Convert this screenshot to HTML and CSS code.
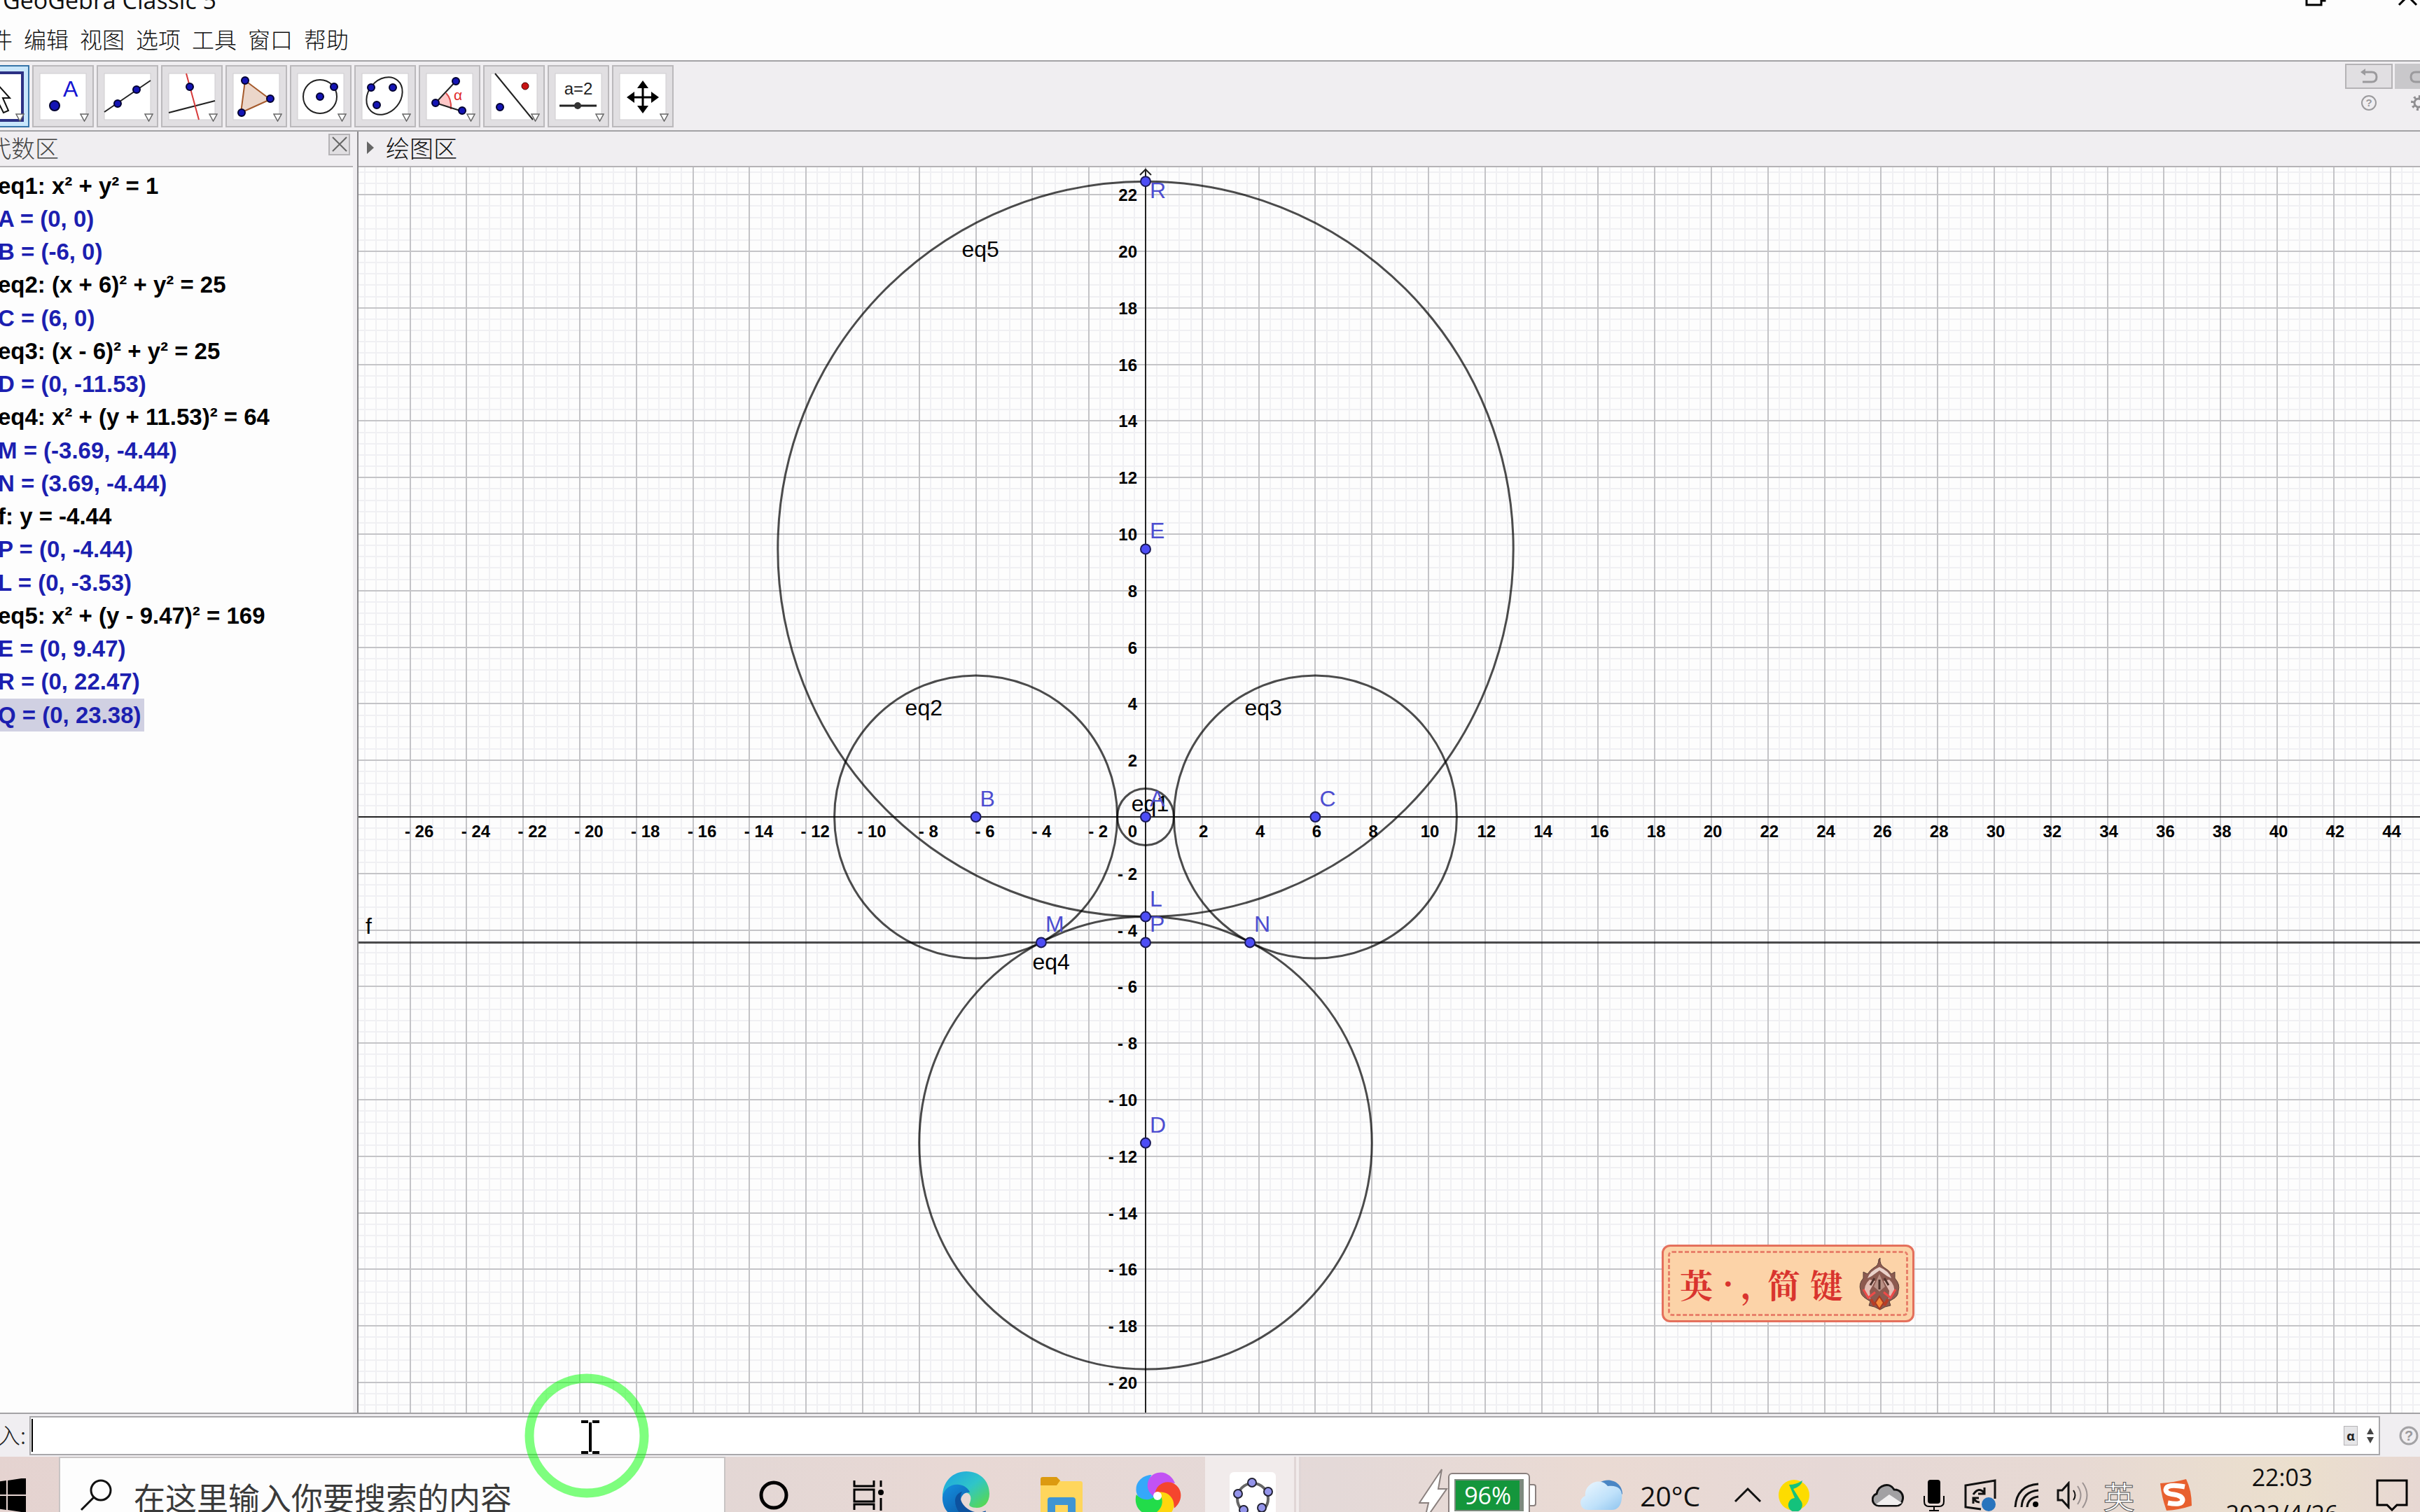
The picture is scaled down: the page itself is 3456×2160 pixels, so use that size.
FILE: index.html
```html
<!DOCTYPE html>
<html lang="zh-CN">
<head>
    <meta charset="UTF-8">
    <meta name="viewport" content="width=device-width, initial-scale=1.0">
    <title>GeoGebra Classic 5</title>
    <link rel="stylesheet" href="styles.css">
</head>
<body>
    <div class="screen">
        <header class="titlebar">
            <h1>GeoGebra Classic 5</h1>
            <div class="window-buttons">
                <button aria-label="还原"><svg width="30" height="30" viewBox="0 0 30 30"><path d="M8 6V1h20v20h-4M2 7h21v20H2z" fill="none" stroke="#000" stroke-width="3"/></svg></button>
                <button aria-label="关闭"><svg width="30" height="30" viewBox="0 0 30 30"><path d="M2 2l25 25M27 2L2 27" stroke="#000" stroke-width="3"/></svg></button>
            </div>
        </header>

        <nav class="menubar">
            <button>文件</button>
            <button>编辑</button>
            <button>视图</button>
            <button>选项</button>
            <button>工具</button>
            <button>窗口</button>
            <button>帮助</button>
        </nav>

        <svg class="defs" width="0" height="0">
            <symbol id="caret" viewBox="0 0 13 12"><path d="M1 1h11L6.500 11z" fill="#fff" stroke="#666" stroke-width="1.500"/></symbol>
        </svg>

        <div class="toolbar">
            <button class="tool selected" aria-label="移动">
                <svg viewBox="0 0 88 88"><rect x="9" y="10" width="69" height="68" fill="#fff" stroke="#2c3184" stroke-width="4"/><path d="M33 16v41l9-8 9 18 7-3-8-18h10z" fill="#fff" stroke="#111" stroke-width="2"/><use href="#caret" x="68" y="68" width="13" height="12"/></svg>
            </button>
            <button class="tool" aria-label="点">
                <svg viewBox="0 0 88 88"><rect x="11" y="11" width="66" height="66" class="sheet"/><circle cx="32" cy="57" r="7" class="dot"/><text x="44" y="44" font-size="32" fill="#1414d2">A</text><use href="#caret" x="68" y="68" width="13" height="12"/></svg>
            </button>
            <button class="tool" aria-label="直线">
                <svg viewBox="0 0 88 88"><rect x="11" y="11" width="66" height="66" class="sheet"/><path d="M11 66l66-45" class="ink"/><circle cx="30" cy="54" r="5" class="dot"/><circle cx="57" cy="34" r="5" class="dot"/><use href="#caret" x="68" y="68" width="13" height="12"/></svg>
            </button>
            <button class="tool" aria-label="垂线">
                <svg viewBox="0 0 88 88"><rect x="11" y="11" width="66" height="66" class="sheet"/><path d="M11 67l66-17" class="ink"/><path d="M36 11l18 66" stroke="#d83a3a" stroke-width="2"/><circle cx="41" cy="30" r="5" class="dot"/><use href="#caret" x="68" y="68" width="13" height="12"/></svg>
            </button>
            <button class="tool" aria-label="多边形">
                <svg viewBox="0 0 88 88"><rect x="11" y="11" width="66" height="66" class="sheet"/><path d="M28 21l36 27-42 19z" fill="#ebd6ca" stroke="#a55a2c" stroke-width="2"/><circle cx="28" cy="21" r="5" class="dot"/><circle cx="64" cy="47" r="5" class="dot"/><circle cx="23" cy="67" r="5" class="dot"/><use href="#caret" x="68" y="68" width="13" height="12"/></svg>
            </button>
            <button class="tool" aria-label="圆">
                <svg viewBox="0 0 88 88"><rect x="11" y="11" width="66" height="66" class="sheet"/><circle cx="43" cy="44" r="24" class="ink"/><circle cx="43" cy="44" r="5" class="dot"/><circle cx="63" cy="30" r="5" class="dot"/><use href="#caret" x="68" y="68" width="13" height="12"/></svg>
            </button>
            <button class="tool" aria-label="椭圆">
                <svg viewBox="0 0 88 88"><rect x="11" y="11" width="66" height="66" class="sheet"/><ellipse cx="43" cy="43" rx="29" ry="23" transform="rotate(-50 43 43)" class="ink"/><circle cx="24" cy="31" r="5" class="dot"/><circle cx="55" cy="31" r="5" class="dot"/><circle cx="32" cy="56" r="5" class="dot"/><use href="#caret" x="68" y="68" width="13" height="12"/></svg>
            </button>
            <button class="tool" aria-label="角度">
                <svg viewBox="0 0 88 88"><rect x="11" y="11" width="66" height="66" class="sheet"/><path d="M24 53l15-14q8 8 6 22z" fill="#ffc8c8"/><path d="M39 39q8 8 7 23" fill="none" stroke="#e04848" stroke-width="2"/><path d="M53 22L24 53l38 12" class="ink"/><text x="50" y="49" font-size="21" fill="#e02828">α</text><circle cx="53" cy="22" r="5" class="dot"/><circle cx="24" cy="53" r="5" class="dot"/><circle cx="62" cy="64" r="5" class="dot"/><use href="#caret" x="68" y="68" width="13" height="12"/></svg>
            </button>
            <button class="tool" aria-label="轴对称">
                <svg viewBox="0 0 88 88"><rect x="11" y="11" width="66" height="66" class="sheet"/><path d="M17 11l54 66" class="ink"/><circle cx="60" cy="29" r="5" fill="#c81414" stroke="#400" stroke-width="1"/><circle cx="24" cy="59" r="5" class="dot"/><use href="#caret" x="68" y="68" width="13" height="12"/></svg>
            </button>
            <button class="tool" aria-label="滑动条">
                <svg viewBox="0 0 88 88"><rect x="11" y="11" width="66" height="66" class="sheet"/><text x="44" y="41" font-size="24" text-anchor="middle" fill="#222">a=2</text><path d="M17 57h53" stroke="#222" stroke-width="3"/><circle cx="43" cy="57" r="5" fill="#333"/><use href="#caret" x="68" y="68" width="13" height="12"/></svg>
            </button>
            <button class="tool" aria-label="移动视图">
                <svg viewBox="0 0 88 88"><rect x="11" y="11" width="66" height="66" class="sheet"/><path d="M26 45h35M44 27v35" stroke="#000" stroke-width="3"/><path d="M44 21l8 11H36zM44 68l8-11H36zM21 45l11-8v16zM67 45l-11-8v16z"/><use href="#caret" x="68" y="68" width="13" height="12"/></svg>
            </button>

            <div class="toolbar-side">
                <button class="undo" aria-label="撤销"><svg width="26" height="22" viewBox="0 0 26 22"><path d="M7 5h10q7 0 7 7t-7 7H4" fill="none" stroke="#9b9a9d" stroke-width="3"/><path d="M8 0v10L1 5z" fill="#9b9a9d"/></svg></button>
                <button class="redo" aria-label="重做"><svg width="26" height="22" viewBox="0 0 26 22"><path d="M19 5H9q-7 0-7 7t7 7h13" fill="none" stroke="#9b9a9d" stroke-width="3"/><path d="M18 0v10l7-5z" fill="#9b9a9d"/></svg></button>
                <button class="plain" aria-label="帮助"><svg width="24" height="24" viewBox="0 0 24 24"><circle cx="12" cy="12" r="10" fill="none" stroke="#9b9a9d" stroke-width="2"/><text x="12" y="17" font-size="15" font-weight="bold" text-anchor="middle" fill="#9b9a9d">?</text></svg></button>
                <button class="plain" aria-label="设置"><svg width="24" height="24" viewBox="0 0 24 24"><circle cx="12" cy="12" r="6" fill="none" stroke="#8f8e91" stroke-width="3"/><circle cx="12" cy="12" r="9" fill="none" stroke="#8f8e91" stroke-width="4" stroke-dasharray="3 4"/></svg></button>
            </div>
        </div>

        <main class="workspace">
            <section class="algebra">
                <div class="panel-head">
                    <h2>代数区</h2>
                    <button class="close" aria-label="关闭代数区"><svg width="24" height="24" viewBox="0 0 24 24"><path d="M2 2l20 20M22 2L2 22" stroke="#666" stroke-width="2"/></svg></button>
                </div>
                <ul class="objects">
                    <li>eq1: x² + y² = 1</li>
                    <li class="point">A = (0, 0)</li>
                    <li class="point">B = (-6, 0)</li>
                    <li>eq2: (x + 6)² + y² = 25</li>
                    <li class="point">C = (6, 0)</li>
                    <li>eq3: (x - 6)² + y² = 25</li>
                    <li class="point">D = (0, -11.53)</li>
                    <li>eq4: x² + (y + 11.53)² = 64</li>
                    <li class="point">M = (-3.69, -4.44)</li>
                    <li class="point">N = (3.69, -4.44)</li>
                    <li>f: y = -4.44</li>
                    <li class="point">P = (0, -4.44)</li>
                    <li class="point">L = (0, -3.53)</li>
                    <li>eq5: x² + (y - 9.47)² = 169</li>
                    <li class="point">E = (0, 9.47)</li>
                    <li class="point">R = (0, 22.47)</li>
                    <li class="point"><span class="current">Q = (0, 23.38)</span></li>
                </ul>
            </section>

            <section class="graphics">
                <div class="panel-head">
                    <span class="expand"></span>
                    <h2>绘图区</h2>
                </div>
                <svg id="graph" class="graph"></svg>
            </section>
        </main>

        <div class="inputbar">
            <label for="command">输入:</label>
            <div class="command-box">
                <span class="text-caret"></span>
                <input type="text" id="command">
                <button class="alpha" aria-label="符号">α</button>
                <button class="history" aria-label="历史"><svg width="12" height="24" viewBox="0 0 12 24"><path d="M6 1l5 9H1zM6 23l5-9H1z" fill="#444"/></svg></button>
            </div>
            <button class="input-help" aria-label="输入帮助"><svg width="30" height="30" viewBox="0 0 30 30"><circle cx="15" cy="15" r="12" fill="none" stroke="#a3a2a5" stroke-width="3"/><text x="15" y="22" font-size="20" font-weight="bold" text-anchor="middle" fill="#9b9a9d">?</text></svg></button>
        </div>

        <footer class="taskbar">
            <button class="start" aria-label="开始"><svg width="50" height="48" viewBox="0 0 50 48"><path d="M0 6l22-3v20H0zM24 3l26-4v24H24zM0 25h22v20L0 42zM24 25h26v24l-26-4z"/></svg></button>
            <div class="search">
                <svg width="48" height="48" viewBox="0 0 48 48"><circle cx="31" cy="17" r="14" fill="none" stroke="#111" stroke-width="3"/><path d="M21 27L3 45" stroke="#111" stroke-width="3"/></svg>
                <input type="text" aria-label="搜索" placeholder="在这里输入你要搜索的内容">
            </div>
            <button class="app" aria-label="Cortana"><svg width="48" height="48" viewBox="0 0 48 48"><circle cx="24" cy="24" r="18" fill="none" stroke="#000" stroke-width="5"/></svg></button>
            <button class="app" aria-label="任务视图"><svg width="48" height="48" viewBox="0 0 48 48"><path d="M2 3v8h28V3M2 45v-8h28v8M2 16h28v17H2zM40 3v9M40 28v18" fill="none" stroke="#000" stroke-width="3"/><circle cx="40" cy="20" r="4"/></svg></button>
            <button class="app" aria-label="Edge">
                <svg width="68" height="68" viewBox="0 0 68 68">
                    <defs>
                        <linearGradient id="edgeTop" x1="0" y1="0" x2="1" y2="1"><stop offset="0" stop-color="#1ba1e2"/><stop offset=".5" stop-color="#2fc5c9"/><stop offset="1" stop-color="#5fdc3c"/></linearGradient>
                        <linearGradient id="edgeLow" x1="0" y1="0" x2="1" y2="1"><stop offset="0" stop-color="#148fe0"/><stop offset="1" stop-color="#0b4a94"/></linearGradient>
                    </defs>
                    <path d="M1 36C1 14 16 0 35 0c20 0 33 14 33 32 0 13-8 20-18 20-8 0-13-3-10-7 4-10-1-15-8-15C24 16 8 22 1 36z" fill="url(#edgeTop)"/>
                    <path d="M1 36c2-12 13-19 24-17 7 1 13 5 15 11-8-1-13 5-13 12 1 11 12 19 22 18 6-1 12-3 14-4-5 8-16 12-28 12C12 68 0 54 1 36z" fill="url(#edgeLow)"/>
                    <path d="M19 42c0-7 5-12 10-13-3 5-3 11 0 16 6 10 17 14 26 14 4-1 7-3 8-2-4 7-14 11-22 11-12-2-22-13-22-26z" fill="#0d529f"/>
                </svg>
            </button>
            <button class="app" aria-label="文件资源管理器"><svg width="60" height="56" viewBox="0 0 60 56"><path d="M0 6q0-3 3-3h20l6 5h28q3 0 3 3v45H0z" fill="#ffd65c"/><path d="M0 5q0-3 3-3h20l5 5-5 7H0z" fill="#dc9a10"/><path d="M10 56V35q0-4 4-4h32q4 0 4 4v21H39V42H21v14z" fill="#3f95d3"/></svg></button>
            <button class="app" aria-label="浏览器">
                <svg width="68" height="68" viewBox="0 0 68 68">
                    <path d="M34 38C14 32 16 6 34 2c12-3 22 6 25 15-14-3-23 5-25 21z" fill="#35a8fa" transform="rotate(288 34 34)"/>
                    <path d="M34 38C14 32 16 6 34 2c12-3 22 6 25 15-14-3-23 5-25 21z" fill="#c252f4"/>
                    <path d="M34 38C14 32 16 6 34 2c12-3 22 6 25 15-14-3-23 5-25 21z" fill="#f5452e" transform="rotate(72 34 34)"/>
                    <path d="M34 38C14 32 16 6 34 2c12-3 22 6 25 15-14-3-23 5-25 21z" fill="#fed60e" transform="rotate(144 34 34)"/>
                    <path d="M34 38C14 32 16 6 34 2c12-3 22 6 25 15-14-3-23 5-25 21z" fill="#22dc4a" transform="rotate(216 34 34)"/>
                    <circle cx="34" cy="35" r="6" fill="#fff"/>
                </svg>
            </button>
            <button class="app active" aria-label="GeoGebra">
                <svg width="66" height="66" viewBox="0 0 66 66"><rect width="66" height="66" rx="6" fill="#fff"/><ellipse cx="33" cy="38" rx="22" ry="22" fill="none" stroke="#666" stroke-width="4"/><g fill="#9494ea" stroke="#223" stroke-width="2"><circle cx="32" cy="15" r="6"/><circle cx="55" cy="28" r="6"/><circle cx="46" cy="51" r="6"/><circle cx="20" cy="54" r="6"/><circle cx="12" cy="31" r="6"/></g></svg>
            </button>

            <div class="tray">
                <div class="battery">
                    <svg width="42" height="78" viewBox="0 0 42 78"><path d="M33 2L1 50h13L8 76l32-46H28z" fill="#fff" stroke="#8a807e" stroke-width="2"/></svg>
                    <div class="cell"><span>96%</span></div>
                    <i class="nub"></i>
                </div>
                <button class="weather">
                    <svg width="62" height="46" viewBox="0 0 62 46">
                        <defs><linearGradient id="sky" x1="0" y1="0" x2="1" y2="1"><stop offset="0" stop-color="#eef8ff"/><stop offset=".6" stop-color="#bfe1fa"/><stop offset="1" stop-color="#8fc4ee"/></linearGradient></defs>
                        <path d="M30 4c10-6 30-2 31 17l-8 8-20-14z" fill="#4a86c4"/>
                        <path d="M12 44C0 44-3 28 8 24 6 6 30-4 40 10c14-2 22 4 20 18-1 10-6 16-14 16z" fill="url(#sky)"/>
                    </svg>
                    20°C
                </button>
                <button class="tray-icon" aria-label="显示隐藏的图标"><svg width="40" height="24" viewBox="0 0 40 24"><path d="M2 21L20 3l18 18" fill="none" stroke="#111" stroke-width="3"/></svg></button>
                <button class="tray-icon music" aria-label="音乐"><svg width="46" height="46" viewBox="0 0 46 46"><circle cx="23" cy="23" r="22" fill="#fddc00"/><path d="M16 8q10 0 19-6-1 8-13 12l10 16a10 10 0 1 1-8-3z" fill="#14c27c"/></svg></button>
                <button class="tray-icon" aria-label="OneDrive"><svg width="46" height="34" viewBox="0 0 46 34"><path d="M10 32C0 32-2 18 7 15 9 2 26-2 32 9c10 0 14 8 12 15-1 5-4 8-9 8z" fill="#a2a1a3" stroke="#111" stroke-width="3"/><path d="M6 30l19-14 18 12-6 3H10z" fill="#f1efef"/></svg></button>
                <button class="tray-icon" aria-label="麦克风"><svg width="34" height="46" viewBox="0 0 34 46"><rect x="8" y="1" width="18" height="34" rx="4"/><path d="M3 24v8q0 7 7 7h14q7 0 7-7v-8M17 39v6M10 45h14" fill="none" stroke="#000" stroke-width="2"/></svg></button>
                <button class="tray-icon" aria-label="更新"><svg width="46" height="46" viewBox="0 0 46 46"><path d="M44 28V2L2 9v31l22 3" fill="none" stroke="#111" stroke-width="3"/><path d="M13 22q8-12 16-2M29 12v9h-9M22 33q-6 0-8-6M13 35v-8h8" fill="none" stroke="#111" stroke-width="3"/><circle cx="35" cy="36" r="10" fill="#2874bd"/></svg></button>
                <button class="tray-icon" aria-label="网络"><svg width="36" height="36" viewBox="0 0 36 36"><path d="M2 35Q4 4 35 2M11 35Q12 13 35 11M19 35q1-13 16-15" fill="none" stroke="#111" stroke-width="3"/><circle cx="31" cy="31" r="4"/></svg></button>
                <button class="tray-icon" aria-label="音量"><svg width="46" height="40" viewBox="0 0 46 40"><path d="M2 13h6l9-10v34L8 27H2z" fill="none" stroke="#111" stroke-width="3"/><path d="M24 13q5 7 0 14" fill="none" stroke="#111" stroke-width="2"/><path d="M30 7q9 13 0 26M37 2q13 18 0 36" fill="none" stroke="#9b9291" stroke-width="2"/></svg></button>
                <button class="tray-icon ime">英</button>
                <button class="tray-icon sogou" aria-label="搜狗输入法"><svg width="46" height="46" viewBox="0 0 46 46"><path d="M1 6Q20 5 38 0q8 16 8 38-18 6-36 7Q3 26 1 6z" fill="#e8602f"/><path d="M36 11q-26-5-27 4 0 6 12 7 12 2 12 8-1 8-21 4" fill="none" stroke="#fff" stroke-width="7"/></svg></button>
                <button class="clock"><time>22:03</time><time>2022/4/26</time></button>
                <button class="notify" aria-label="通知"><svg width="46" height="46" viewBox="0 0 46 46"><path d="M2 2h42v35H30l-7 7-7-7H2z" fill="none" stroke="#000" stroke-width="3"/></svg></button>
            </div>
        </footer>

        <div class="ime-skin">
            <div class="ime-inner">
                <span>英</span><span class="middot">·</span><span class="comma">，</span><span>简</span><span>键</span>
                <svg width="60" height="76" viewBox="0 0 60 76">
                    <path d="M31 1q-1 10 6 14 6 3 10 9l5-3v9q8 9 5 18 0 8-8 12l-5 3 2 6-8 2-7 4-8-4-8-2 2-6-5-3q-9-5-9-13-3-9 4-17v-9l6 3q4-6 9-9 7-3 7-12z" fill="#8c5a50" stroke="#5c4038" stroke-width="1"/>
                    <path d="M30 14q-14 6-17 16l6-3 11-8 11 8 6 3q-3-10-17-16z" fill="#ead2ca"/>
                    <path d="M16 32q-9 8-7 20l8 8-1-12 8-14zM44 32q9 8 7 20l-8 8 1-12-8-14z" fill="#e3bdb4"/>
                    <path d="M30 24l-8 18 8 7 8-7z" fill="#b99085"/>
                    <path d="M7 46l7 12 10-8M53 46l-7 12-10-8" fill="none" stroke="#ee4a48" stroke-width="3"/>
                    <path d="M30 32v14M23 30l-6 10M37 30l6 10" stroke="#4f322c" stroke-width="3"/>
                    <path d="M30 56l6 9-6 9-6-9z" fill="#f5893a" stroke="#a83820" stroke-width="2"/>
                    <path d="M18 60l5 9M42 60l-5 9" stroke="#b83c26" stroke-width="4"/>
                </svg>
            </div>
        </div>

        <svg class="pointer" width="180" height="180" viewBox="0 0 180 180">
            <circle cx="90" cy="90" r="82" fill="none" stroke="#00ff00" stroke-opacity=".5" stroke-width="13"/>
            <path d="M82 70h10M98 70h10M82 114h10M98 114h10" stroke="#000" stroke-width="4"/>
            <path d="M95 71v42" stroke="#000" stroke-width="4"/>
        </svg>
    </div>

    <script src="script.js"></script>
</body>
</html>
```
FILE: styles.css
```css
* {
    box-sizing: border-box;
}

body {
    margin: 0;
    height: 100vh;
    overflow: hidden;
    background-color: #fdfdfd;
    font-family: "Open Sans", "Noto Sans CJK SC", sans-serif;
    color: #222;
}

button {
    padding: 0;
    border: none;
    background: none;
    font: inherit;
    color: inherit;
}

h1, h2 {
    margin: 0;
    font-weight: normal;
}

svg {
    display: block;
}

.defs {
    position: absolute;
}

/* the desktop runs past every edge of the window */
.screen {
    position: relative;
    display: flex;
    flex-direction: column;
    height: calc(100vh + 55px);
    margin: -24px -40px -31px -48px;
}

.titlebar {
    display: flex;
    justify-content: space-between;
    align-items: center;
    height: 48px;
    padding: 0 42px 0 52px;
}

.titlebar h1 {
    font-size: 34px;
    line-height: 48px;
    color: #111;
}

.window-buttons {
    display: flex;
    gap: 102px;
    padding-bottom: 10px;
}

.menubar {
    display: flex;
    align-items: center;
    gap: 16px;
    height: 64px;
    padding: 0 2px;
    border-bottom: 2px solid #a3a2a5;
}

.menubar button {
    font-family: "Noto Sans CJK SC", sans-serif;
    font-size: 32px;
    font-weight: 300;
    color: #111;
}

.toolbar {
    display: flex;
    gap: 4px;
    height: 100px;
    padding: 5px 8px 0 2px;
    background-color: #f0eef1;
    border-bottom: 2px solid #a3a2a5;
}

.tool {
    width: 88px;
    height: 89px;
    background-color: #e1dfe2;
    border: 2px solid #bbb9bc;
}

.tool.selected {
    background-color: #c8e6fb;
    border-color: #3674a8;
}

.tool svg {
    margin: -2px;
}

.tool text, .toolbar-side text, .input-help text {
    font-family: "Liberation Sans", sans-serif;
}

.sheet {
    fill: #fff;
    stroke: #cfcdd0;
}

.dot {
    fill: #1414b4;
    stroke: #000030;
    stroke-width: 2;
}

.ink {
    fill: none;
    stroke: #222;
    stroke-width: 2;
}

.toolbar-side {
    display: grid;
    grid-template-columns: 68px 68px;
    grid-template-rows: 36px 36px;
    gap: 2px 3px;
    margin-left: auto;
    margin-top: -2px;
}

.toolbar-side button {
    display: flex;
    justify-content: center;
    align-items: center;
}

.undo {
    background-color: #e1dfe2;
    border: 2px solid #b5b3b6;
}

.redo {
    background-color: #c9c8cb;
}

.workspace {
    display: flex;
    flex: 1;
    min-height: 0;
    background-color: #f0eef1;
}

.algebra {
    display: flex;
    flex-direction: column;
    width: 552px;
}

.panel-head {
    display: flex;
    align-items: center;
    height: 51px;
    padding-bottom: 4px;
    background-color: #f0eef1;
    border-bottom: 2px solid #b5b3b6;
}

.panel-head h2 {
    font-family: "Noto Sans CJK SC", sans-serif;
    font-size: 34px;
    line-height: 44px;
    font-weight: 300;
    color: #111;
}

.algebra .panel-head {
    justify-content: space-between;
    padding-left: 30px;
    padding-right: 4px;
}

.algebra .panel-head h2 {
    color: #444;
}

.close {
    display: flex;
    justify-content: center;
    align-items: center;
    width: 31px;
    height: 31px;
    margin-bottom: 9px;
    background-color: #e1dfe2;
    border: 2px solid #b5b3b6;
}

.objects {
    flex: 1;
    margin: 0;
    padding: 3px 0 0 45px;
    list-style: none;
    background-color: #fdfdfd;
    font-family: "Liberation Sans", sans-serif;
    font-size: 33px;
    font-weight: bold;
    line-height: 47px;
    color: #000;
}

.objects li:nth-child(4n) {
    margin-bottom: 1px;
}

.point {
    color: #1c1fb0;
}

.current {
    display: inline-block;
    padding-right: 4px;
    background-color: #d0d0e2;
}

.graphics {
    display: flex;
    flex: 1;
    flex-direction: column;
    margin-left: 6px;
    border-left: 2px solid #8a898c;
}

.graphics .panel-head {
    gap: 17px;
    padding-left: 12px;
}

.expand {
    border-left: 10px solid #666;
    border-top: 9px solid transparent;
    border-bottom: 9px solid transparent;
}

.graph {
    flex: 1;
    width: 100%;
    min-height: 0;
    background-color: #fdfdfd;
    font-family: "Liberation Sans", sans-serif;
}

.grid-minor {
    stroke: #f0f0f3;
    stroke-width: 2;
}

.grid-major {
    stroke: #c4c4c7;
    stroke-width: 2;
}

.axis {
    fill: none;
    stroke: #222;
    stroke-width: 2;
}

.curve {
    fill: none;
    stroke: #000;
    stroke-opacity: 0.7;
    stroke-width: 3;
}

.tick {
    font-size: 24px;
    font-weight: bold;
}

.curve-label {
    font-size: 32px;
}

.marker {
    fill: #4d4df5;
    stroke: #1a1a5a;
    stroke-width: 2;
}

.marker-label {
    font-size: 32px;
    fill: #4d4dd0;
}

.inputbar {
    display: flex;
    align-items: center;
    height: 63px;
    background-color: #f0eef1;
    border-top: 2px solid #a3a2a5;
}

.inputbar label {
    width: 90px;
    padding: 0 5px 4px 0;
    font-family: "Noto Sans CJK SC", sans-serif;
    font-size: 32px;
    font-weight: 300;
    text-align: right;
    white-space: nowrap;
}

.command-box {
    display: flex;
    flex: 1;
    align-items: center;
    height: 56px;
    padding: 0 6px 0 1px;
    background-color: #fff;
    border: 2px solid #a9a8ab;
}

.text-caret {
    width: 2px;
    height: 47px;
    background-color: #000;
}

.command-box input {
    flex: 1;
    height: 48px;
    border: none;
    outline: none;
    font-size: 32px;
}

.alpha {
    width: 20px;
    height: 28px;
    margin-right: 12px;
    background-color: #e6e6e8;
    border: 1px solid #b5b3b6;
    font-size: 18px;
    font-weight: bold;
    line-height: 24px;
}

.input-help {
    width: 97px;
    padding-left: 26px;
}

.taskbar {
    display: flex;
    height: 110px;
    background: linear-gradient(to right, #e5d3d0, #e3d7d5 30%, #e8d8d4 40%, #e4d9d8 55%, #eadad3 66%, #e6d8d6 75%, #e7d9d3 85%, #ebdfcd 94%, #e6d6d4);
}

.taskbar button {
    display: flex;
    justify-content: center;
    align-items: center;
}

.start {
    width: 132px;
    padding-right: 12px;
}

.search {
    display: flex;
    align-items: center;
    gap: 30px;
    width: 952px;
    padding-left: 27px;
    background-color: #fdfdfd;
    border: 2px solid #c8c4c4;
}

.search input {
    flex: 1;
    padding: 4px 0 0;
    border: none;
    outline: none;
    background: none;
    font-family: "Noto Sans CJK SC", sans-serif;
    font-size: 45px;
}

.search input::placeholder {
    color: #3a3a3a;
}

.app {
    width: 137px;
}

.taskbar .active {
    padding-left: 8px;
    background-color: #f1ebeb;
    border-right: 10px double #e0d6d6;
}

.tray {
    display: flex;
    margin-left: auto;
    padding-right: 27px;
}

.battery {
    display: flex;
    align-items: center;
    margin-right: 62px;
}

.cell {
    display: flex;
    width: 117px;
    height: 64px;
    padding: 7px;
    background-color: #fff;
    border: 2px solid #8a807e;
    border-radius: 6px;
}

.cell span {
    flex: 1;
    background-color: #14963c;
    border: 2px solid #7d8a7e;
    border-right-width: 6px;
    color: #fff;
    font-size: 34px;
    line-height: 42px;
    text-align: center;
}

.nub {
    width: 9px;
    height: 32px;
    background-color: #fff;
    border: 2px solid #8a807e;
    border-left: none;
    border-radius: 0 4px 4px 0;
}

.weather {
    gap: 24px;
    padding-right: 35px;
    font-size: 39px;
    color: #111;
}

.tray-icon {
    width: 66px;
}

.music {
    margin-right: 68px;
}

.ime {
    font-family: "Noto Sans CJK SC", sans-serif;
    font-size: 45px;
    color: #fff;
    -webkit-text-stroke: 1px #555;
}

.sogou {
    width: 96px;
}

.taskbar .clock {
    flex-direction: column;
    width: 208px;
    font-size: 34px;
    line-height: 52px;
    color: #111;
}

.notify {
    width: 106px;
}

/* floating input method bar */
.ime-skin {
    position: absolute;
    left: 2421px;
    top: 1802px;
    width: 361px;
    height: 111px;
    padding: 6px;
    background-color: #fcd3a8;
    border: 3px solid #e4705c;
    border-radius: 12px;
}

.ime-inner {
    display: flex;
    align-items: center;
    gap: 14px;
    height: 100%;
    padding: 0 8px 0 14px;
    border: 3px dashed #e8806a;
    border-radius: 6px;
    color: #d9342e;
    font-family: "Liberation Serif", "Noto Serif CJK SC", "Noto Sans CJK SC", serif;
    font-size: 47px;
    font-weight: bold;
}

.middot {
    width: 12px;
}

.comma {
    width: 24px;
}

.ime-inner svg {
    margin-left: auto;
}

.pointer {
    position: absolute;
    left: 796px;
    top: 1985px;
}
```
FILE: script.js
```js
const graph = document.getElementById("graph");
const width = graph.clientWidth;
const height = graph.clientHeight;
const unit = 40.4;
const originX = 1124;
const originY = 928;

const circles = [
    { name: "eq1", x: 0, y: 0, r: 1, labelX: -0.5, labelY: 0.2 },
    { name: "eq2", x: -6, y: 0, r: 5, labelX: -8.5, labelY: 3.6 },
    { name: "eq3", x: 6, y: 0, r: 5, labelX: 3.5, labelY: 3.6 },
    { name: "eq4", x: 0, y: -11.53, r: 8, labelX: -4, labelY: -5.4 },
    { name: "eq5", x: 0, y: 9.47, r: 13, labelX: -6.5, labelY: 19.8 }
];

const points = [
    { name: "A", x: 0, y: 0 },
    { name: "B", x: -6, y: 0 },
    { name: "C", x: 6, y: 0 },
    { name: "D", x: 0, y: -11.53 },
    { name: "M", x: -3.69, y: -4.44 },
    { name: "N", x: 3.69, y: -4.44 },
    { name: "P", x: 0, y: -4.44 },
    { name: "L", x: 0, y: -3.53 },
    { name: "E", x: 0, y: 9.47 },
    { name: "R", x: 0, y: 22.47, below: true }
];

function toX(x) {
    return originX + x * unit;
}

function toY(y) {
    return originY - y * unit;
}

function add(tag, className, attributes, text) {
    const element = document.createElementNS("http://www.w3.org/2000/svg", tag);
    element.setAttribute("class", className);
    for (const key in attributes) {
        element.setAttribute(key, attributes[key]);
    }
    if (text !== undefined) {
        element.textContent = text;
    }
    graph.appendChild(element);
}

function drawGrid(step, className, skip) {
    for (let i = -100; i <= 160; i++) {
        if (skip && i % skip === 0) {
            continue;
        }
        const x = Math.round(toX(i * step));
        const y = Math.round(toY(i * step));
        if (x > 0 && x < width) {
            add("line", className, { x1: x, y1: 0, x2: x, y2: height });
        }
        if (y > 0 && y < height) {
            add("line", className, { x1: 0, y1: y, x2: width, y2: y });
        }
    }
}

drawGrid(0.4, "grid-minor", 5);
drawGrid(2, "grid-major");

// axes
add("line", "axis", { x1: 0, y1: originY, x2: width, y2: originY });
add("line", "axis", { x1: originX, y1: 3, x2: originX, y2: height });
add("path", "axis", { d: `M${originX - 8} 11l8-8 8 8` });

for (let n = -26; n <= 44; n += 2) {
    if (n !== 0) {
        const label = n < 0 ? "- " + -n : n;
        const shift = n < 0 ? 13 : 2;
        add("text", "tick", { x: toX(n) + shift, y: originY + 29, "text-anchor": "middle" }, label);
    }
}
for (let n = -20; n <= 22; n += 2) {
    const label = n < 0 ? "- " + -n : n;
    const shift = n === 0 ? 29 : 9;
    add("text", "tick", { x: originX - 12, y: toY(n) + shift, "text-anchor": "end" }, label);
}

for (const c of circles) {
    add("circle", "curve", { cx: toX(c.x), cy: toY(c.y), r: c.r * unit });
    add("text", "curve-label", { x: toX(c.labelX), y: toY(c.labelY) }, c.name);
}

// line f
add("line", "curve", { x1: 0, y1: toY(-4.44), x2: width, y2: toY(-4.44) });
add("text", "curve-label", { x: 10, y: toY(-4.44) - 12 }, "f");

for (const p of points) {
    add("circle", "marker", { cx: toX(p.x), cy: toY(p.y), r: 7 });
    add("text", "marker-label", { x: toX(p.x) + 6, y: toY(p.y) + (p.below ? 24 : -15) }, p.name);
}
```
